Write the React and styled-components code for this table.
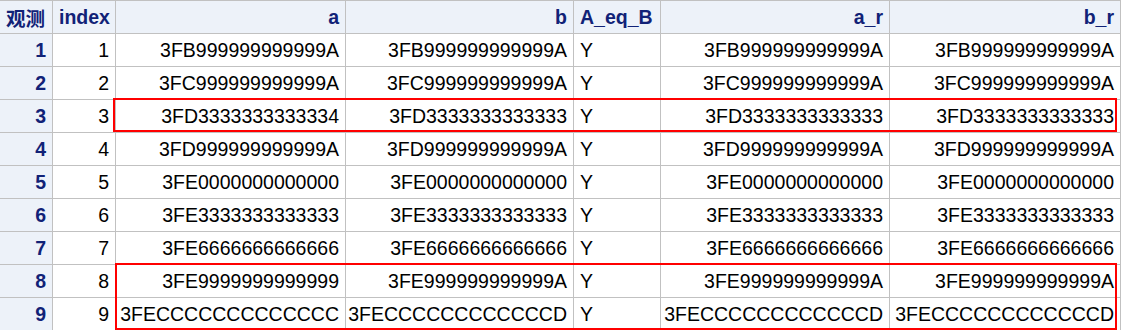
import React from "react";
import styled, { createGlobalStyle } from "styled-components";

const GlobalStyle = createGlobalStyle`
  html, body {
    margin: 0;
    padding: 0;
    background: #ffffff;
  }
`;

const Wrapper = styled.div`
  position: relative;
  width: 1121px;
  height: 330px;
  overflow: hidden;
`;

const Grid = styled.div`
  display: grid;
  grid-template-columns: 52px 62px 229px 227px 86px 228px 230px;
  grid-auto-rows: 32px;
  gap: 1px;
  background: #c1c1c1;
  border-top: 1px solid #c1c1c1;
  border-right: 1px solid #c1c1c1;
  width: fit-content;
  font-family: "Liberation Sans", Arial, "Noto Sans CJK SC", sans-serif;
  font-size: 19.5px;
`;

const Cell = styled.div`
  display: flex;
  align-items: center;
  justify-content: ${(p) => (p.$align === "left" ? "flex-start" : "flex-end")};
  padding: 0 6px;
  background: ${(p) => (p.$head ? "#edf2f9" : "#ffffff")};
  color: ${(p) => (p.$head ? "#112277" : "#000000")};
  font-weight: ${(p) => (p.$head ? 700 : 400)};
  white-space: nowrap;
  overflow: hidden;
`;

const Highlight = styled.div`
  position: absolute;
  border: 2px solid #ff0000;
  box-sizing: border-box;
  pointer-events: none;
`;

const columns = [
  { key: "obs", label: "观测", align: "left" },
  { key: "index", label: "index", align: "left" },
  { key: "a", label: "a", align: "right" },
  { key: "b", label: "b", align: "right" },
  { key: "eq", label: "A_eq_B", align: "left" },
  { key: "ar", label: "a_r", align: "right" },
  { key: "br", label: "b_r", align: "right" },
];

const rows = [
  ["3FB999999999999A", "3FB999999999999A", "3FB999999999999A", "3FB999999999999A"],
  ["3FC999999999999A", "3FC999999999999A", "3FC999999999999A", "3FC999999999999A"],
  ["3FD3333333333334", "3FD3333333333333", "3FD3333333333333", "3FD3333333333333"],
  ["3FD999999999999A", "3FD999999999999A", "3FD999999999999A", "3FD999999999999A"],
  ["3FE0000000000000", "3FE0000000000000", "3FE0000000000000", "3FE0000000000000"],
  ["3FE3333333333333", "3FE3333333333333", "3FE3333333333333", "3FE3333333333333"],
  ["3FE6666666666666", "3FE6666666666666", "3FE6666666666666", "3FE6666666666666"],
  ["3FE9999999999999", "3FE999999999999A", "3FE999999999999A", "3FE999999999999A"],
  ["3FECCCCCCCCCCCCC", "3FECCCCCCCCCCCCD", "3FECCCCCCCCCCCCD", "3FECCCCCCCCCCCCD"],
];

const App = () => {
  return (
    <>
      <GlobalStyle />
      <Wrapper>
        <Grid>
          {columns.map((c) => (
            <Cell key={c.key} $head $align={c.align}>
              {c.label}
            </Cell>
          ))}
          {rows.map((r, i) => (
            <React.Fragment key={i}>
              <Cell $head>{i + 1}</Cell>
              <Cell>{i + 1}</Cell>
              <Cell>{r[0]}</Cell>
              <Cell>{r[1]}</Cell>
              <Cell $align="left">Y</Cell>
              <Cell>{r[2]}</Cell>
              <Cell>{r[3]}</Cell>
            </React.Fragment>
          ))}
        </Grid>
        <Highlight style={{ left: 113, top: 98, width: 1004, height: 34 }} />
        <Highlight style={{ left: 115, top: 263, width: 1002, height: 67 }} />
      </Wrapper>
    </>
  );
};

export default App;
